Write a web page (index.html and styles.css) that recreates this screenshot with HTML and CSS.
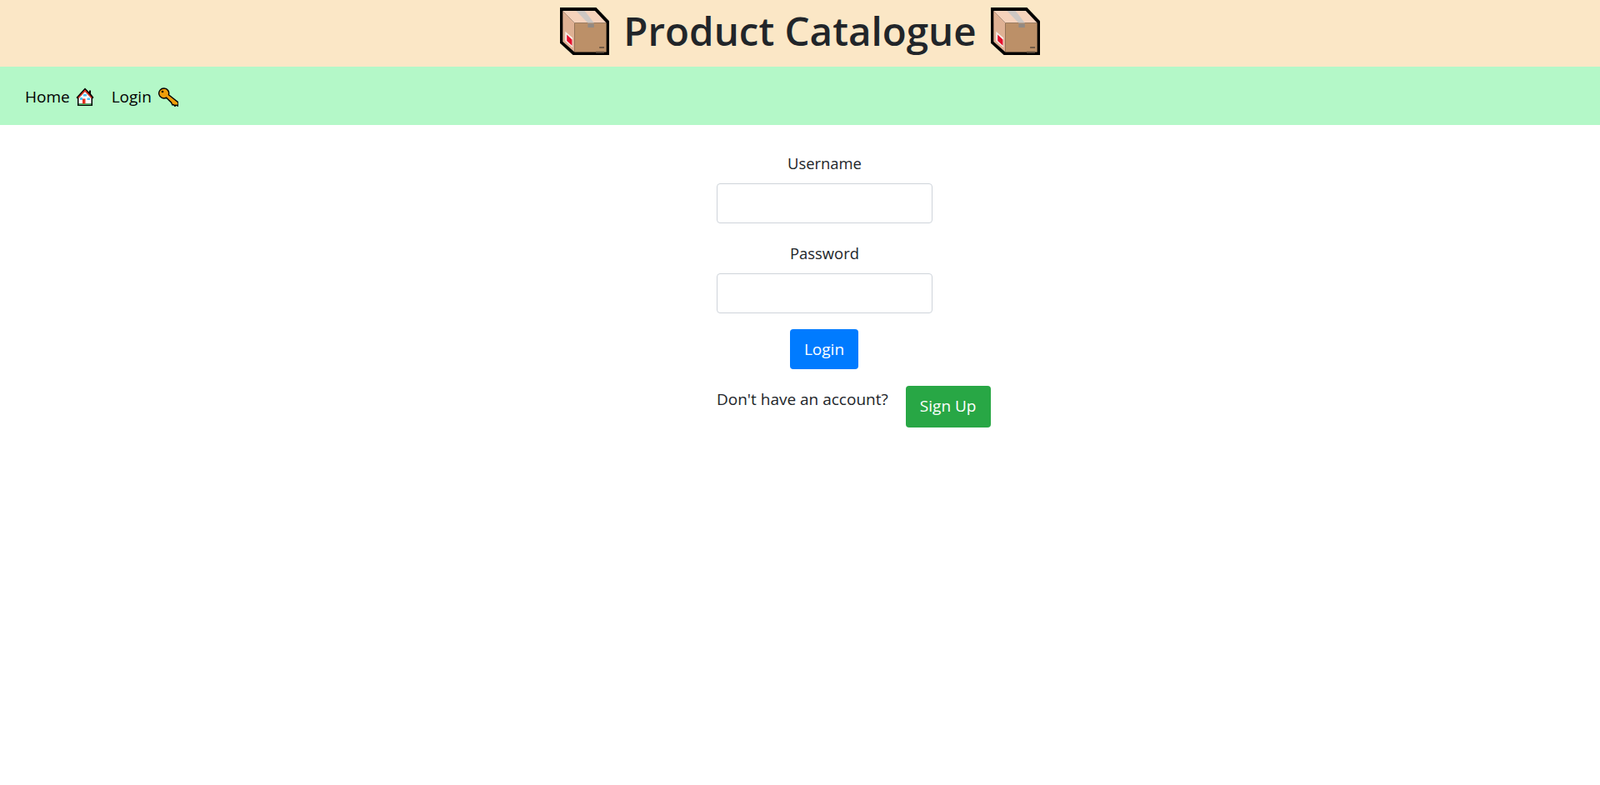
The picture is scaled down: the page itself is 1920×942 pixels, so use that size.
FILE: index.html
```html
<!DOCTYPE html>
<html lang="en">
<head>
  <meta charset="UTF-8">
  <title>Product Catalogue</title>
  <link rel="stylesheet" href="styles.css">
</head>
<body>
  <svg class="defs" width="0" height="0">
    <symbol id="box" viewBox="28 30 159 147" preserveAspectRatio="none">
      <path d="M28 30H145L187 72V177H70L28 140Z" fill="#000"/>
      <path d="M37 40 75 78V168L37 136Z" fill="#dfb194"/>
      <path d="M37 40H141L178 78H75Z" fill="#f6d3bc"/>
      <path d="M75 78H178V168H75Z" fill="#bc9068"/>
      <path d="M80 40H108L138 78H118Z" fill="#cdc8c4"/>
      <path d="M118 80H138V92H118Z" fill="#928a84"/>
      <path d="M45 104 69 124V154L45 134Z" fill="#f6efe9"/>
      <path d="M50 114 67 129V148L50 133Z" fill="#e5102c"/>
      <path d="M155 152H171V156H155ZM144 166H171V171H144Z" fill="#5b4b3c"/>
    </symbol>
  </svg>

  <header class="banner">
    <svg class="box-icon"><use href="#box"/></svg>
    <h1>Product Catalogue</h1>
    <svg class="box-icon"><use href="#box"/></svg>
  </header>

  <nav class="navbar">
    <a href="#" class="nav-link">Home
      <svg class="nav-icon" viewBox="0 0 24 24">
        <path d="M12 1.5 17 6.5V4.5H19V8.5L22.5 13 21 14.5V23H3V14.5L1.5 13Z" fill="#000"/>
        <path d="M12 3.5 20.5 13 19.5 14 12 6 4.5 14 3.5 13Z" fill="#e8321e"/>
        <path d="M12 6 19.5 14V20.5H4.5V14Z" fill="#fff"/>
        <path d="M10 9H14V11.5H10ZM6 13H9V16H6ZM14.5 13.5H18V16H14.5Z" fill="#4fc3f7"/>
        <path d="M9 14.5H12.5V21H9Z" fill="#e8321e"/>
        <path d="M4.5 20.5H19.5V22H4.5Z" fill="#43b05c"/>
      </svg>
    </a>
    <a href="#" class="nav-link">Login
      <svg class="nav-icon key-icon" viewBox="0 0 24 24">
        <path d="M12.4 9.8 24 19 23.5 23 21 22 20 23.5 18.5 21.5 17 22 15.5 19 9.6 13.2A6 6 0 1 1 12.4 9.8Z" fill="#f09d0a" stroke="#000" stroke-width="1.4"/>
        <circle cx="5" cy="6" r="1.3" fill="#000"/>
      </svg>
    </a>
  </nav>

  <main class="login-wrap">
    <form class="login-form">
      <div class="form-group">
        <label for="username">Username</label>
        <input type="text" id="username" class="form-control">
      </div>
      <div class="form-group">
        <label for="password">Password</label>
        <input type="password" id="password" class="form-control">
      </div>
      <button type="button" class="btn btn-primary">Login</button>
    </form>
    <div class="signup-row">
      <p>Don't have an account?</p>
      <a href="#" class="btn btn-success">Sign Up</a>
    </div>
  </main>
</body>
</html>
```

FILE: styles.css
```css
body {
  margin: 0;
  font-family: 'Open Sans', 'Noto Sans', sans-serif;
  font-size: 18px;
  line-height: 1.5;
  color: #212529;
  background-color: #fff;
}

.defs {
  position: absolute;
}

.banner {
  height: 80px;
  box-sizing: border-box;
  padding-bottom: 5px;
  display: flex;
  justify-content: center;
  align-items: center;
  gap: 17px;
  background-color: #fbe7c6;
}

.banner h1 {
  margin: -2px 0 0;
  font-size: 47.5px;
  font-weight: 600;
  line-height: 1.2;
  white-space: nowrap;
}

.box-icon {
  width: 59px;
  height: 57px;
}

.navbar {
  height: 70px;
  box-sizing: border-box;
  padding: 2px 0 0 30px;
  display: flex;
  align-items: center;
  gap: 20px;
  background-color: #b4f8c8;
}

.nav-link {
  display: flex;
  align-items: center;
  gap: 6px;
  color: #000;
  text-decoration: none;
  font-size: 19px;
}

.nav-icon {
  width: 24px;
  height: 24px;
}

.key-icon {
  margin-left: 2px;
}

.login-wrap {
  width: 460px;
  margin: 0 auto;
  padding: 32px 0 0 130px;
  box-sizing: border-box;
}

.login-form {
  width: 259px;
  display: flex;
  flex-direction: column;
  align-items: center;
}

.form-group {
  width: 100%;
  text-align: center;
  margin-bottom: 22px;
}

.form-group:last-of-type {
  margin-bottom: 19px;
}

label {
  display: block;
  font-size: 18.4px;
  line-height: 27px;
  margin-bottom: 11px;
}

.form-control {
  display: block;
  width: 100%;
  height: 48px;
  box-sizing: border-box;
  border: 1px solid #ced4da;
  border-radius: 4px;
  background-color: #fff;
}

.btn {
  display: inline-block;
  box-sizing: border-box;
  border: none;
  border-radius: 4px;
  color: #fff;
  font-family: inherit;
  font-size: 19px;
  text-align: center;
  text-decoration: none;
}

.btn-primary {
  width: 82px;
  height: 48px;
  line-height: 48px;
  padding: 0;
  margin-right: 1px;
  background-color: #007bff;
}

.btn-success {
  width: 102px;
  height: 50px;
  line-height: 48px;
  background-color: #28a745;
}

.signup-row {
  display: flex;
  align-items: flex-start;
  gap: 21px;
  margin-top: 20px;
}

.signup-row p {
  margin: 2px 0 0;
  font-size: 19px;
  line-height: 29px;
  white-space: nowrap;
}
```
